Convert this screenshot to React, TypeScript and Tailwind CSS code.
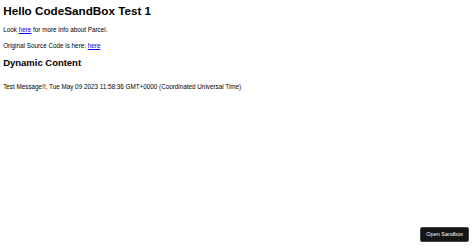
export default function App() {
  const now = "Tue May 09 2023 11:58:36 GMT+0000 (Coordinated Universal Time)";

  return (
    <div
      className="relative min-h-screen bg-white px-[3.2px] pt-[1px] text-black"
      style={{ fontFamily: '"Liberation Sans", Arial, sans-serif' }}
    >
      <h1 className="text-[11.7px] font-bold leading-[19px]">Hello CodeSandBox Test 1</h1>

      <p className="mt-[5px] text-[6.32px] leading-[9.48px]">
        Look{" "}
        <a href="#" className="text-[#0000ee] underline">
          here
        </a>{" "}
        for more info about Parcel.
      </p>

      <p className="mt-[6.32px] text-[6.32px] leading-[9.48px]">
        Original Source Code is here:{" "}
        <a href="#" className="text-[#0000ee] underline">
          here
        </a>
      </p>

      <h2 className="mt-[5.4px] text-[9.48px] font-bold leading-[14.2px]">Dynamic Content</h2>

      <div className="mt-[12.6px] text-[6.32px] leading-[9.48px]">Test Message!!, {now}</div>

      {/* floating sandbox button */}
      <a
        href="#"
        className="fixed bottom-[6px] right-[5px] flex h-[15px] items-center rounded-[2px] border border-[#444] bg-[#151515] px-[5px] text-[5.5px] text-white"
      >
        Open Sandbox
      </a>
    </div>
  );
}
